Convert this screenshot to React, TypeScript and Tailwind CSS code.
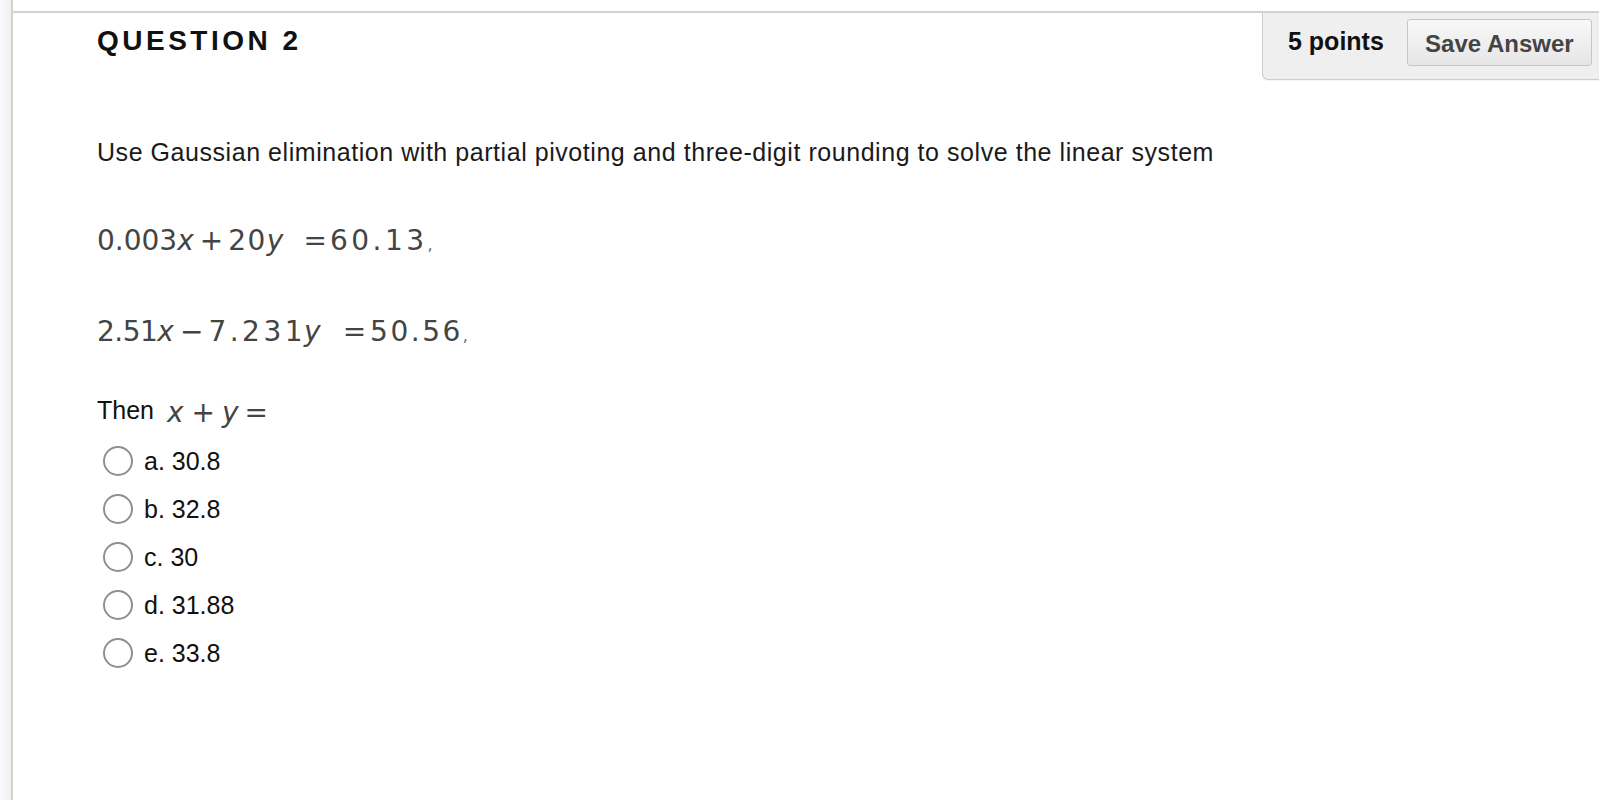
import React from "react";

const sans = { fontFamily: '"Liberation Sans", Arial, Helvetica, sans-serif' };
const math = { fontFamily: '"DejaVu Sans", Verdana, sans-serif' };

function Radio({ label }: { label: string }) {
  return (
    <div className="flex items-center h-[48px]">
      <span className="ml-[6px] w-[30px] h-[30px] rounded-full border-[2.5px] border-[#8f8f8f] bg-white shrink-0" />
      <span className="ml-[11px] text-[25px] leading-[28px] text-[#111]">{label}</span>
    </div>
  );
}

export default function App() {
  const options = ["a. 30.8", "b. 32.8", "c. 30", "d. 31.88", "e. 33.8"];
  return (
    <div className="w-[1599px] h-[800px] bg-white flex overflow-hidden" style={sans}>
      <div className="w-[11px] shrink-0 bg-gradient-to-r from-[#fcfcfc] to-[#efefef]" />
      <div className="w-[2px] shrink-0 bg-[#d3d3c7]" />
      <div className="flex-1 flex flex-col min-w-0">
        <div className="h-[11px] shrink-0" />
        <div className="h-[2px] shrink-0 bg-[#d2d2d2]" />
        <div className="flex justify-between items-start">
          <h2 className="pl-[84px] pt-[12px] text-[28px] leading-[32px] font-bold tracking-[3.5px] text-[#111]">
            QUESTION 2
          </h2>
          <div className="w-[337px] h-[67px] bg-[#efefef] border-l border-b border-[#cdcdcd] rounded-bl-[6px] flex items-start pl-[25px] shadow-[0_1px_1px_rgba(0,0,0,0.05)]">
            <span className="pt-[13px] text-[25px] leading-[30px] font-bold text-[#111]">5 points</span>
            <button className="ml-[23px] mt-[6px] w-[185px] h-[47px] rounded-[3px] border border-[#c6c6c6] bg-gradient-to-b from-[#f8f8f8] to-[#e6e6e6] text-[24px] leading-[28px] font-bold text-[#444] flex items-center justify-center pt-[2px]">
              Save Answer
            </button>
          </div>
        </div>

        <div className="pl-[84px]">
          <p className="mt-[58px] text-[25px] leading-[28px] tracking-[0.55px] text-[#1a1a1a]">
            Use Gaussian elimination with partial pivoting and three-digit rounding to solve the linear system
          </p>

          <div className="mt-[58px] flex items-baseline text-[28px] leading-[34px] text-[#444]" style={math}>
            <span>0.003</span>
            <span className="italic">x</span>
            <span className="ml-[6px]">+</span>
            <span className="ml-[5px] tracking-[1.5px]">20</span>
            <span className="italic">y</span>
            <span className="ml-[20px]">=</span>
            <span className="ml-[3px] tracking-[3.5px]">60.13</span>
            <span className="text-[16px] text-[#666]">,</span>
          </div>

          <div className="mt-[53px] flex items-baseline text-[28px] leading-[34px] text-[#444]" style={math}>
            <span className="tracking-[-0.5px]">2.51</span>
            <span className="italic">x</span>
            <span className="ml-[6px]">−</span>
            <span className="ml-[5px] tracking-[3.5px]">7.231</span>
            <span className="italic -ml-[2px]">y</span>
            <span className="ml-[22px]">=</span>
            <span className="ml-[4px] tracking-[2.5px]">50.56</span>
            <span className="text-[16px] text-[#666]">,</span>
          </div>

          <div className="mt-[43px] h-[28px] text-[25px] leading-[28px] text-[#111] flex items-baseline">
            <span>Then</span>
            <span className="ml-[13px] text-[28px] leading-[28px] text-[#444] relative top-[3px]" style={math}>
              <span className="italic">x</span>
              <span className="ml-[8px]">+</span>
              <span className="ml-[7px] italic">y</span>
              <span className="ml-[6px]">=</span>
            </span>
          </div>

          <div className="mt-[13px] flex flex-col">
            {options.map((o) => (
              <Radio key={o} label={o} />
            ))}
          </div>
        </div>
      </div>
    </div>
  );
}
